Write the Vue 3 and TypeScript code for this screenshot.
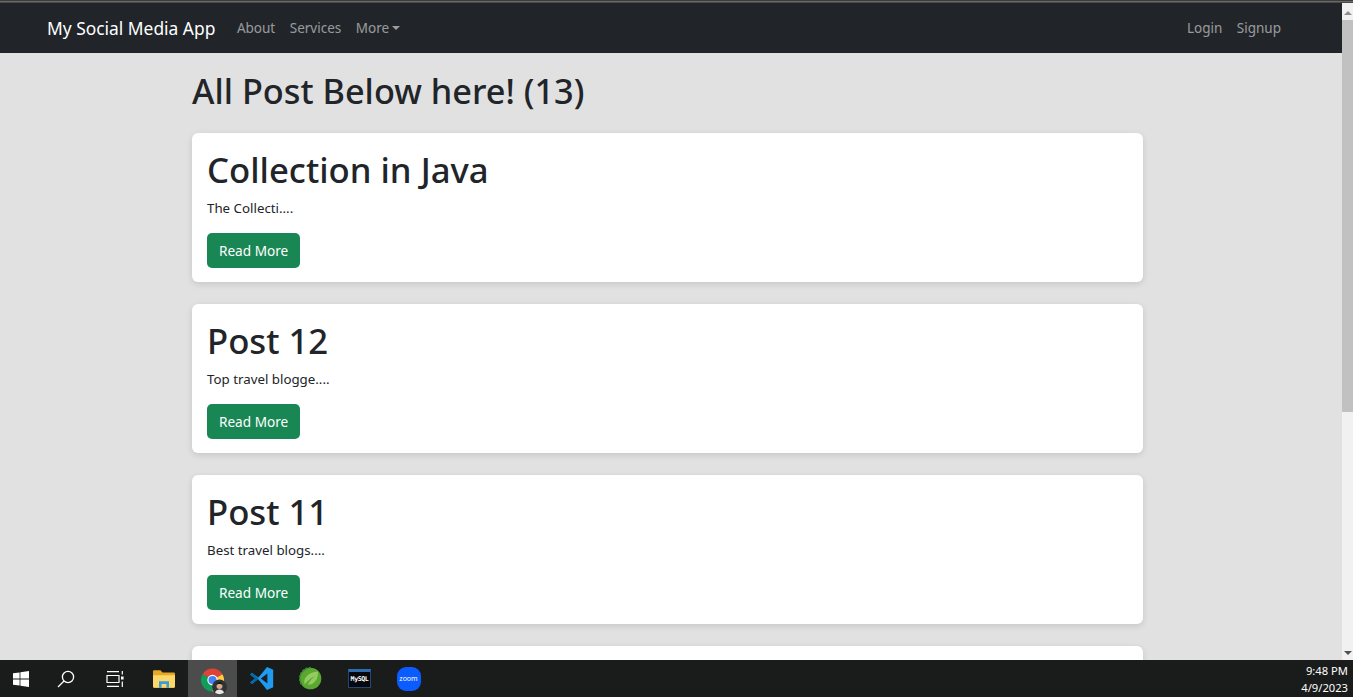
<template>
  <div class="screen">
    <div class="window-edge"></div>
    <div class="viewport">
      <div class="page">
        <nav class="navbar">
          <a class="brand">My Social Media App</a>
          <a class="nav-link">About</a>
          <a class="nav-link">Services</a>
          <a class="nav-link">More<span class="caret"></span></a>
          <div class="nav-right">
            <a class="nav-link">Login</a>
            <a class="nav-link">Signup</a>
          </div>
        </nav>
        <main class="container">
          <h1 class="page-title">All Post Below here! (13)</h1>
          <section v-for="post in posts" :key="post.title" class="card">
            <h2 class="card-title">{{ post.title }}</h2>
            <p class="card-text">{{ post.text }}</p>
            <a class="btn">Read More</a>
          </section>
          <!-- next card, only its top edge shows above the taskbar -->
          <section class="card"></section>
        </main>
      </div>
      <div class="scrollbar">
        <span class="arrow up"></span>
        <div class="thumb"></div>
        <span class="arrow down"></span>
      </div>
    </div>
    <footer class="taskbar">
      <div class="task-icon first">
        <svg width="16" height="16" viewBox="0 0 16 16">
          <path fill="#fff" d="M0 2.3 6.6 1.4V7.6H0ZM7.4 1.3 16 0V7.6H7.4ZM0 8.4H6.6V14.6L0 13.7ZM7.4 8.4H16V16L7.4 14.7Z" />
        </svg>
      </div>
      <div class="task-icon">
        <svg width="18" height="18" viewBox="0 0 18 18" fill="none" stroke="#fff" stroke-width="1.3">
          <circle cx="11" cy="7" r="5.6" />
          <path d="M7 11 1 17" />
        </svg>
      </div>
      <div class="task-icon">
        <svg width="18" height="16" viewBox="0 0 18 16" fill="none" stroke="#fff" stroke-width="1.2">
          <path d="M1 .6H13M1 15.4H13M1 4.5H13V11.5H1Z" />
          <rect x="15" y="5.5" width="2.6" height="3" fill="#fff" stroke="none" />
          <path d="M16.3 0V3.5M16.3 10.5V16" />
        </svg>
      </div>
      <div class="task-icon">
        <svg width="22" height="18" viewBox="0 0 22 18">
          <path fill="#e8a825" d="M0 1.5C0 .7.5.2 1.2.2H7.4L9.6 2.4H20.8C21.5 2.4 22 3 22 3.7V16.6C22 17.3 21.5 17.8 20.8 17.8H1.2C.5 17.8 0 17.3 0 16.6Z" />
          <path fill="#fbd86a" d="M0 5.2H22V16.6C22 17.3 21.5 17.8 20.8 17.8H1.2C.5 17.8 0 17.3 0 16.6Z" />
          <path fill="#3a9bdc" d="M6 17.8V11.2H16V17.8H13.4V14H8.6V17.8Z" />
        </svg>
      </div>
      <div class="task-icon active">
        <svg width="30" height="32" viewBox="0 0 30 32">
          <path fill="#db4437" d="M14.5 17 4.54 11.25A11.5 11.5 0 0 1 24.46 11.25Z" />
          <path fill="#0f9d58" d="M14.5 17 14.5 28.5A11.5 11.5 0 0 1 4.54 11.25Z" />
          <path fill="#ffcd40" d="M14.5 17 24.46 11.25A11.5 11.5 0 0 1 14.5 28.5Z" />
          <circle cx="14.5" cy="17" r="5.2" fill="#fff" />
          <circle cx="14.5" cy="17" r="4.1" fill="#4285f4" />
          <circle cx="21.5" cy="24" r="7.5" fill="#2f3336" />
          <circle cx="21.5" cy="23" r="3" fill="#d9a98c" />
          <path fill="#1c1a1a" d="M18.4 22.6C18.3 20 19.6 19 21.5 19S24.7 20 24.6 22.6C23.8 21.4 22.8 21.1 21.5 21.1S19.2 21.4 18.4 22.6Z" />
          <path fill="#e8e4e0" d="M17 29.6C17.6 27.4 19.4 26.4 21.5 26.4S25.4 27.4 26 29.6C23.4 31.8 19.6 31.8 17 29.6Z" />
        </svg>
      </div>
      <div class="task-icon">
        <svg width="25" height="25" viewBox="0 0 25 25">
          <path fill="#2489ca" d="M1 8.6 3 6.8 9.2 11.6 19 2 19 7 9 12.6 3.4 18 1 16.4 6 12.5Z" />
          <path fill="#0065a9" d="M1 16.4 3 18 9.2 13.4 19 23 19 18 9 12.4 3.4 7 1 8.6 6 12.5Z" opacity=".9" />
          <path fill="#1f9cf0" d="M18 1 24.2 3.8V21.2L18 24 8.8 12.5Z" />
          <path fill="#1a2026" d="M18.4 7.4V17.6L11.8 12.5Z" />
        </svg>
      </div>
      <div class="task-icon">
        <svg width="25" height="25" viewBox="0 0 25 25">
          <circle cx="12.5" cy="12.5" r="10.8" fill="#5aa832" />
          <path d="M3.5 18A10.8 10.8 0 0 1 12.5 1.7" fill="none" stroke="#3f8f2e" stroke-width="2" stroke-dasharray="2 1.4" />
          <path fill="#3f8f2e" d="M2 9.5A11 11 0 0 0 12.5 23.3 11 11 0 0 1 9 2Z" />
          <path fill="#92cc5f" d="M6.6 18.6C5 12.6 9.4 6.6 20 5.6 20.4 13 16.4 19 9.8 18.8 11.4 15 13.8 12.6 17 10 13.2 11.8 9.4 14.8 6.6 18.6Z" />
        </svg>
      </div>
      <div class="task-icon">
        <div class="mysql-icon"><span class="mysql-label">MySQL</span></div>
      </div>
      <div class="task-icon">
        <div class="zoom-icon">zoom</div>
      </div>
      <div class="clock">
        <span>9:48 PM</span>
        <span>4/9/2023</span>
      </div>
    </footer>
  </div>
</template>

<script setup lang="ts">
interface Post {
  title: string
  text: string
}

const posts: Post[] = [
  { title: 'Collection in Java', text: 'The Collecti....' },
  { title: 'Post 12', text: 'Top travel blogge....' },
  { title: 'Post 11', text: 'Best travel blogs....' },
]
</script>

<style>
html,
body {
  margin: 0;
  overflow: hidden;
}
</style>

<style scoped>
.screen {
  display: flex;
  flex-direction: column;
  width: 1353px;
  height: 697px;
  font-family: "Noto Sans", "Open Sans", sans-serif;
  color: #212529;
  overflow: hidden;
}

.window-edge {
  height: 3px;
  flex: none;
  background: linear-gradient(#3c3c3c 0 1px, #6a6a6a 1px 2px, #4a4a4a 2px);
}

.viewport {
  flex: 1;
  display: flex;
  min-height: 0;
}

.page {
  flex: 1;
  min-width: 0;
  background: #e1e1e1;
  overflow: hidden;
}

.navbar {
  display: flex;
  align-items: center;
  gap: 14.5px;
  height: 50px;
  padding: 0 61px 0 47px;
  background: #212529;
}

.brand {
  margin-right: 7px;
  font-size: 17.4px;
  color: #fff;
}

.nav-link {
  font-size: 13.5px;
  line-height: 18px;
  margin-bottom: 1px;
  color: rgba(255, 255, 255, 0.55);
}

.caret {
  display: inline-block;
  margin-left: 3px;
  vertical-align: 3px;
  border-top: 4px solid;
  border-left: 4px solid transparent;
  border-right: 4px solid transparent;
}

.nav-right {
  display: flex;
  gap: 14.5px;
  margin-left: auto;
}

.container {
  width: 951px;
  margin-left: 192px;
}

.page-title {
  margin: 14px 0 19px;
  font-size: 34.3px;
  font-weight: 500;
  line-height: 47px;
}

.card {
  height: 149px;
  box-sizing: border-box;
  margin-bottom: 22px;
  padding: 14px 15px 15px;
  background: #fff;
  border-radius: 6px;
  box-shadow: 0 2px 6px rgba(0, 0, 0, 0.12);
}

.card-title {
  margin: 0 0 6px;
  font-size: 34.7px;
  font-weight: 500;
  line-height: 45px;
}

.card-text {
  margin: 0 0 15px;
  font-size: 13.3px;
  line-height: 20px;
}

.btn {
  display: inline-block;
  padding: 0 12px;
  font-size: 13.6px;
  line-height: 35px;
  color: #fff;
  background: #198754;
  border-radius: 5px;
}

.scrollbar {
  position: relative;
  flex: none;
  width: 11px;
  background: #f1f1f1;
}

.thumb {
  position: absolute;
  top: 17px;
  left: 0;
  right: 0;
  height: 392px;
  background: #c1c1c1;
}

.arrow {
  position: absolute;
  left: 2px;
  border-left: 4px solid transparent;
  border-right: 4px solid transparent;
}

.arrow.up {
  top: 8px;
  border-bottom: 4px solid #8e8e8e;
}

.arrow.down {
  bottom: 5px;
  border-top: 4px solid #505050;
}

.taskbar {
  display: flex;
  align-items: stretch;
  flex: none;
  height: 37px;
  padding-right: 5px;
  background: #1a1b1b;
}

.task-icon {
  display: flex;
  align-items: center;
  justify-content: center;
  width: 49px;
}

.task-icon.first {
  width: 41px;
}

.task-icon.active {
  background: #4b4c4b;
}

.mysql-icon {
  display: flex;
  align-items: center;
  justify-content: center;
  box-sizing: border-box;
  width: 23px;
  height: 19px;
  margin-bottom: 1px;
  overflow: hidden;
  background: #05070d;
  border: 1px solid #1f4a78;
  border-top: 3px solid #2f6cb0;
}

.mysql-label {
  font-family: "DejaVu Sans Mono", monospace;
  font-size: 6.6px;
  font-weight: 700;
  letter-spacing: -0.4px;
  color: #fff;
}

.zoom-icon {
  width: 24px;
  height: 24px;
  font-size: 7px;
  line-height: 24px;
  text-align: center;
  color: #fff;
  background: #0b5cff;
  border-radius: 9px;
}

.clock {
  display: flex;
  flex-direction: column;
  align-items: flex-end;
  justify-content: center;
  gap: 2px;
  margin-left: auto;
  font-size: 11.2px;
  line-height: 15px;
  color: #fff;
}
</style>
